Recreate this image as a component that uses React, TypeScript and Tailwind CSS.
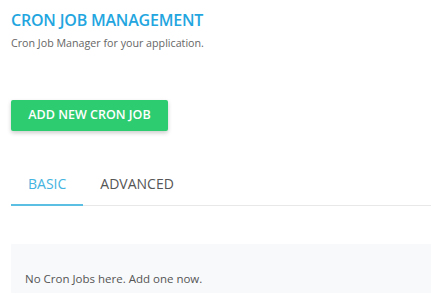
import React from "react";

export default function App() {
  return (
    <div className="w-full h-[300px] overflow-hidden bg-white" style={{ fontFamily: '"Open Sans", sans-serif' }}>
      <div className="pl-[11px] pt-[9px]">
        <h1 className="text-[16px] leading-[22px] font-semibold text-[#23a6df] tracking-[-0.2px]">CRON JOB MANAGEMENT</h1>
        <p className="mt-[5px] text-[10.7px] leading-[14px] text-[#666]">Cron Job Manager for your application.</p>
        <button className="mt-[50px] w-[157px] h-[31px] rounded-[2px] bg-[#2ecc71] text-white text-[12.5px] font-semibold shadow-[0_2px_4px_rgba(0,0,0,0.2)]">
          ADD NEW CRON JOB
        </button>
        <div className="mt-[39px] flex border-b border-[#e8e8e8]">
          <div className="px-[17px] pb-[11px] pt-[5px] text-[14px] leading-[18px] text-[#45b4e0] border-b-2 border-[#5bbfe3] -mb-px">BASIC</div>
          <div className="px-[17px] pb-[11px] pt-[5px] text-[14px] leading-[18px] text-[#555]">ADVANCED</div>
        </div>
        <div className="mt-[38px] h-[49px] bg-[#f8f9fb] pl-[14px] pt-[27px]">
          <p className="text-[11.5px] leading-[15px] text-[#555]">No Cron Jobs here. Add one now.</p>
        </div>
      </div>
    </div>
  );
}
